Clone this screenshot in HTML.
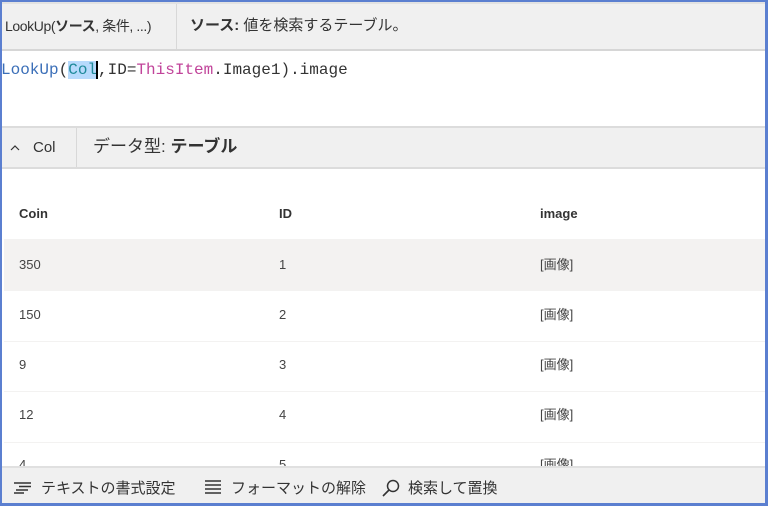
<!DOCTYPE html>
<html><head><meta charset="utf-8"><style>
*{margin:0;padding:0;box-sizing:border-box}
body{width:768px;height:506px;overflow:hidden;background:#fff;font-family:"Liberation Sans","Noto Sans CJK JP",sans-serif;color:#323130;position:relative;line-height:1.2}
.a{position:absolute;white-space:nowrap}
.frame{position:absolute;left:0;top:0;width:768px;height:506px;border:2px solid #5b7fd0;border-right-width:3px;border-bottom-width:3px;pointer-events:none;z-index:9}
.t{font-size:13px;color:#444;line-height:16px}
</style></head><body>
<div class="a" style="left:0;top:0;width:768px;height:51px;background:#f0f0f0;border-top:4px solid #e2e2e2;border-bottom:2px solid #d6d6d6"></div>
<div class="a" style="left:176px;top:4px;width:1px;height:45px;background:#d8d8d8"></div>
<div class="a" style="left:5px;top:18px;font-size:14px;color:#333;letter-spacing:-0.4px">LookUp(<b>ソース</b>, 条件, ...)</div>
<div class="a" style="left:190px;top:17px;font-size:15px;color:#333"><b>ソース:</b> 値を検索するテーブル。</div>
<div class="a" style="left:1px;top:61px;font-family:'Liberation Mono',monospace;font-size:16px;color:#333;white-space:pre"><span style="color:#3b6fb8">LookUp</span>(<span style="background:#b7dafc;color:#1f8a9a">Col</span><span style="border-left:2px solid #000;margin-left:-1px"></span>,ID=<span style="color:#c1449a">ThisItem</span>.Image1).image</div>
<div class="a" style="left:0;top:126px;width:768px;height:43px;background:#f0f0f0;border-top:2px solid #dcdcdc;border-bottom:2px solid #dcdcdc"></div>
<div class="a" style="left:76px;top:128px;width:1px;height:39px;background:#d8d8d8"></div>
<svg class="a" style="left:10px;top:144px" width="10" height="7"><polyline points="1,6 5,2 9,6" fill="none" stroke="#333" stroke-width="1.2"/></svg>
<div class="a" style="left:33px;top:139px;font-size:15px;color:#333">Col</div>
<div class="a" style="left:93px;top:137px;font-size:17px;color:#333">データ型: <b>テーブル</b></div>
<div class="a t" style="left:19px;top:206px;font-weight:bold;color:#333">Coin</div>
<div class="a t" style="left:279px;top:206px;font-weight:bold;color:#333">ID</div>
<div class="a t" style="left:540px;top:206px;font-weight:bold;color:#333">image</div>
<div class="a" style="left:4px;top:239px;width:764px;height:52px;background:#f3f2f1"></div>
<div class="a" style="left:4px;top:341px;width:764px;height:1px;background:#f3f2f1"></div>
<div class="a" style="left:4px;top:391px;width:764px;height:1px;background:#f3f2f1"></div>
<div class="a" style="left:4px;top:442px;width:764px;height:1px;background:#f3f2f1"></div>
<div class="a t" style="left:19px;top:257px">350</div><div class="a t" style="left:279px;top:257px">1</div><div class="a t" style="left:540px;top:257px">[画像]</div>
<div class="a t" style="left:19px;top:307px">150</div><div class="a t" style="left:279px;top:307px">2</div><div class="a t" style="left:540px;top:307px">[画像]</div>
<div class="a t" style="left:19px;top:357px">9</div><div class="a t" style="left:279px;top:357px">3</div><div class="a t" style="left:540px;top:357px">[画像]</div>
<div class="a t" style="left:19px;top:407px">12</div><div class="a t" style="left:279px;top:407px">4</div><div class="a t" style="left:540px;top:407px">[画像]</div>
<div class="a t" style="left:19px;top:457px">4</div><div class="a t" style="left:279px;top:457px">5</div><div class="a t" style="left:540px;top:457px">[画像]</div>
<div class="a" style="left:0;top:466px;width:768px;height:40px;background:#f0f0f0;border-top:2px solid #e0e0e0"></div>
<svg class="a" style="left:14px;top:482px" width="18" height="12"><g stroke="#333" stroke-width="1.5"><line x1="0" y1="1" x2="17" y2="1"/><line x1="5" y1="4.5" x2="17" y2="4.5"/><line x1="2" y1="8" x2="14" y2="8"/><line x1="0" y1="11" x2="10" y2="11"/></g></svg>
<div class="a" style="left:41px;top:480px;font-size:15px;color:#333">テキストの書式設定</div>
<svg class="a" style="left:205px;top:480px" width="16" height="16"><g stroke="#333" stroke-width="1.5"><line x1="0" y1="1" x2="16" y2="1"/><line x1="0" y1="5" x2="16" y2="5"/><line x1="0" y1="9" x2="16" y2="9"/><line x1="0" y1="13" x2="16" y2="13"/></g></svg>
<div class="a" style="left:231px;top:480px;font-size:15px;color:#333">フォーマットの解除</div>
<svg class="a" style="left:382px;top:479px" width="18" height="18"><circle cx="11" cy="7" r="5.5" fill="none" stroke="#333" stroke-width="1.5"/><line x1="7" y1="11" x2="1" y2="17" stroke="#333" stroke-width="1.6"/></svg>
<div class="a" style="left:408px;top:480px;font-size:15px;color:#333">検索して置換</div>
<div class="frame"></div>
</body></html>
